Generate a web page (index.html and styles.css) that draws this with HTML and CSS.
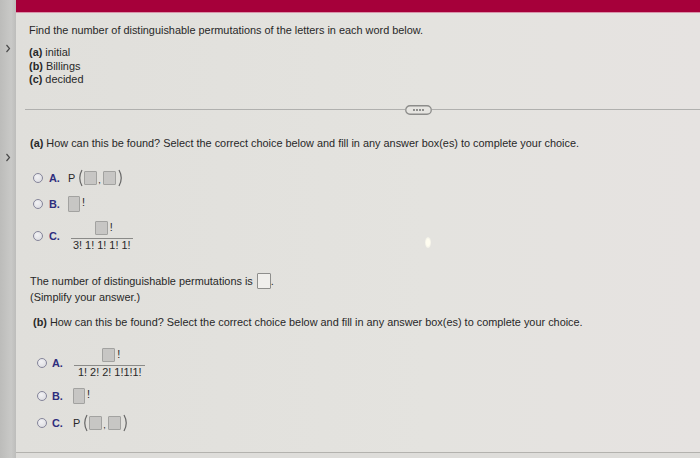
FILE: index.html
```html
<!DOCTYPE html>
<html>
<head>
<meta charset="utf-8">
<link rel="stylesheet" href="styles.css">
</head>
<body>
<div class="screen">
  <aside class="gutter">
    <svg class="chev" width="6" height="9" viewBox="0 0 6 9"><path d="M1.5 1 L4.5 4.5 L1.5 8" fill="none" stroke="#4a4a4a" stroke-width="1.2"/></svg>
    <svg class="chev" width="6" height="9" viewBox="0 0 6 9"><path d="M1.5 1 L4.5 4.5 L1.5 8" fill="none" stroke="#4a4a4a" stroke-width="1.2"/></svg>
  </aside>
  <main class="panel">
    <div class="topbar"></div>
    <div class="intro">
      <p class="prompt">Find the number of distinguishable permutations of the letters in each word below.</p>
      <ul class="words">
        <li><b>(a)</b> initial</li>
        <li><b>(b)</b> Billings</li>
        <li><b>(c)</b> decided</li>
      </ul>
    </div>
    <div class="divider">
      <span class="seg seg-left"></span>
      <svg class="pill" width="27" height="10" viewBox="0 0 27 10"><rect x="0.75" y="0.75" width="25.5" height="8.5" rx="4.25" fill="#e6e5e1" stroke="#8c8c8a" stroke-width="1.3"/><circle cx="9" cy="5" r="0.9" fill="#666"/><circle cx="12" cy="5" r="0.9" fill="#666"/><circle cx="15" cy="5" r="0.9" fill="#666"/><circle cx="18" cy="5" r="0.9" fill="#666"/></svg>
      <span class="seg seg-right"></span>
    </div>

    <section class="part part-a">
      <p class="question"><b>(a)</b> How can this be found? Select the correct choice below and fill in any answer box(es) to complete your choice.</p>
      <div class="options">
        <div class="opt">
          <span class="radio"></span><span class="letter">A.</span>
          <span class="expr">P<svg class="paren" width="6" height="18" viewBox="0 0 6 18"><path d="M5 1 Q0.5 9 5 17" fill="none" stroke="#666" stroke-width="1.2"/></svg><span class="box gray"></span><span class="comma">,</span><span class="box gray"></span><svg class="paren" width="6" height="18" viewBox="0 0 6 18"><path d="M1 1 Q5.5 9 1 17" fill="none" stroke="#666" stroke-width="1.2"/></svg></span>
        </div>
        <div class="opt">
          <span class="radio"></span><span class="letter">B.</span>
          <span class="expr"><span class="box gray tall"></span><span class="bang">!</span></span>
        </div>
        <div class="opt">
          <span class="radio"></span><span class="letter">C.</span>
          <span class="frac">
            <span class="num"><span class="box gray"></span><span class="bang">!</span></span>
            <span class="den">3! 1! 1! 1! 1!</span>
          </span>
        </div>
      </div>
      <p class="result">The number of distinguishable permutations is <span class="box white"></span>.<br>(Simplify your answer.)</p>
    </section>

    <section class="part part-b">
      <p class="question"><b>(b)</b> How can this be found? Select the correct choice below and fill in any answer box(es) to complete your choice.</p>
      <div class="options">
        <div class="opt">
          <span class="radio"></span><span class="letter">A.</span>
          <span class="frac wide">
            <span class="num"><span class="box gray"></span><span class="bang">!</span></span>
            <span class="den">1! 2! 2! 1!1!1!</span>
          </span>
        </div>
        <div class="opt">
          <span class="radio"></span><span class="letter">B.</span>
          <span class="expr"><span class="box gray tall"></span><span class="bang">!</span></span>
        </div>
        <div class="opt">
          <span class="radio"></span><span class="letter">C.</span>
          <span class="expr">P<svg class="paren" width="6" height="18" viewBox="0 0 6 18"><path d="M5 1 Q0.5 9 5 17" fill="none" stroke="#666" stroke-width="1.2"/></svg><span class="box gray"></span><span class="comma">,</span><span class="box gray"></span><svg class="paren" width="6" height="18" viewBox="0 0 6 18"><path d="M1 1 Q5.5 9 1 17" fill="none" stroke="#666" stroke-width="1.2"/></svg></span>
        </div>
      </div>
    </section>
    <span class="glare"></span>
  </main>
</div>
</body>
</html>
```

FILE: styles.css
```css
* { box-sizing: border-box; }
html, body { margin: 0; padding: 0; }
body {
  width: 700px;
  height: 458px;
  overflow: hidden;
  background: #dedddA;
  font-family: "Liberation Sans", Arial, sans-serif;
  font-size: 10.9px;
  color: #282828;
}
.screen { display: flex; height: 458px; }
.gutter {
  width: 16px;
  flex: none;
  background: linear-gradient(to right, #bcbcba, #c9c9c7 70%, #bdbdbb);
  display: flex;
  flex-direction: column;
  align-items: center;
  padding-top: 44px;
  gap: 100px;
}
.chev { display: block; }
.panel {
  flex: 1;
  height: 453px;
  background: linear-gradient(to right, #e0dfdb, #e4e3df 60%, #e6e3e1);
  border-bottom: 1px solid #b3b2ae;
  position: relative;
}
.topbar {
  height: 13px;
  background: #a6003a;
  border-bottom: 1px solid #d993aa;
}
p { margin: 0; }
.intro { padding: 10px 0 0 13px; }
.prompt { line-height: 14px; }
.words {
  list-style: none;
  margin: 9px 0 0;
  padding: 0;
  line-height: 13.5px;
}
.divider {
  display: flex;
  align-items: center;
  height: 10px;
  margin-top: 18px;
  padding-left: 9px;
}
.seg { height: 1px; background: #9c9c9a; border-bottom: 0.5px solid #b0b0ae; }
.seg-left { width: 380px; }
.seg-right { flex: 1; }
.pill { display: block; flex: none; }

.part-a { padding-left: 14px; margin-top: 21px; }
.part-b { padding-left: 17px; margin-top: 10px; }
.question { line-height: 14px; }

.options { display: flex; flex-direction: column; gap: 8px; }
.part-a .options { margin-top: 19px; padding-left: 3px; }
.part-b .options { margin-top: 19px; padding-left: 4px; gap: 9px; }
.opt { display: flex; align-items: center; min-height: 18px; }
.radio {
  width: 10px;
  height: 10px;
  border-radius: 50%;
  border: 1px solid #85859a;
  background: radial-gradient(circle at 40% 35%, #f2f2f4, #d8d8de);
  flex: none;
}
.letter {
  width: 19px;
  margin-left: 6px;
  font-weight: bold;
  color: #2e2e7e;
  flex: none;
}
.part-b .letter { margin-left: 5px; width: 21px; }
.expr { display: flex; align-items: center; }
.paren { display: block; margin: 0 1px 0 2px; }
.box {
  display: inline-block;
  width: 13px;
  height: 14px;
  border: 1px solid #a2a2a0;
  border-radius: 1px;
  vertical-align: middle;
}
.box.gray { background: #c7c6c4; }
.box.tall { height: 16px; width: 12px; }
.box.white { background: #f0efec; border-color: #8e8e8c; height: 16px; width: 14px; margin-left: 1px; }
.comma { align-self: flex-end; margin: 0 2px 2px 1px; font-size: 9px; }
.bang { margin-left: 2px; align-self: flex-start; line-height: 12px; }

.frac {
  display: inline-flex;
  flex-direction: column;
  align-items: center;
  margin-left: 3px;
}
.frac .num { display: flex; align-items: center; padding-left: 4px; }
.frac .den {
  margin-top: 3px;
  border-top: 1px solid #8a8a88;
  padding: 1px 2px 0;
  line-height: 11px;
  white-space: nowrap;
}
.frac.wide .den { padding: 1px 3px 0 4px; }
.part-b .frac { margin-left: 1px; }

.result { margin-top: 22px; line-height: 16px; }
.result .box { vertical-align: -4px; }

.glare {
  position: absolute;
  left: 409px;
  top: 237px;
  width: 6px;
  height: 11px;
  border-radius: 50%;
  background: radial-gradient(ellipse at center, #fffdf0 40%, rgba(255,253,240,0) 100%);
}
```
